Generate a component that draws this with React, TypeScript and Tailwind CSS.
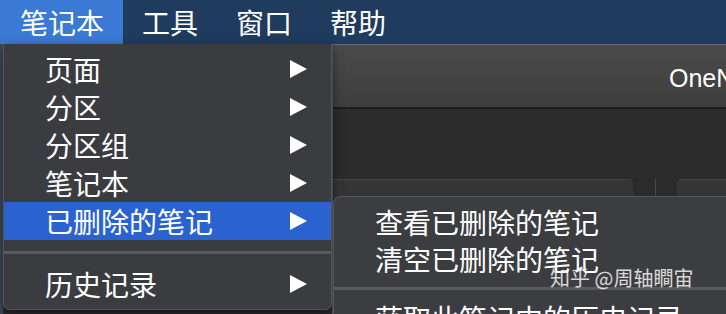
import React from 'react';

const cjk = { fontFamily: '"Noto Sans CJK SC", "Noto Sans", sans-serif' };

function Arrow() {
  return (
    <svg width="17" height="18" viewBox="0 0 17 18" className="shrink-0">
      <path d="M0 0 L17 9 L0 18 Z" fill="#ffffff" />
    </svg>
  );
}

const topMenus = ['笔记本', '工具', '窗口', '帮助'];
const mainItems = ['页面', '分区', '分区组', '笔记本'];

export default function App() {
  return (
    <div className="relative w-[726px] h-[314px] overflow-hidden bg-[#2b2b2b] text-white" style={cjk}>
      {/* menu bar */}
      <div className="flex h-[44px] bg-[#1f3c5e]">
        {topMenus.map((m, i) => (
          <div
            key={m}
            className={`flex items-center px-[19px] text-[28px] leading-none ${i === 0 ? 'bg-[#3a7ad4] pl-[20px]' : ''}`}
          >
            {m}
          </div>
        ))}
      </div>

      {/* window behind */}
      <div className="flex h-[270px]">
        <div className="w-[3px] bg-[#3d4b5b]" />
        <div className="w-[329px]" />
        <div className="flex-1 min-w-0 flex flex-col border-l border-[#5a5a5a]">
          <div className="h-[65px] flex items-center pl-[336px] pt-[6px] overflow-hidden bg-gradient-to-b from-[#4a4a4a] to-[#3e3e3e] border-t border-[#6a6a6a] border-b-2 border-b-[#1c1c1c]">
            <span className="text-[25px] font-medium whitespace-nowrap" style={{ fontFamily: '"Liberation Sans", Arial, sans-serif' }}>
              OneNote
            </span>
          </div>
          <div className="h-[70px] bg-[#2c2c2c]" />
          <div className="flex h-[20px]">
            <div className="w-[300px] rounded-tr-[5px] bg-[#353535] border-t border-[#444]" />
            <div className="w-[22px]" />
            <div className="w-[1px] bg-[#4a4a4a]" />
            <div className="w-[21px]" />
            <div className="flex-1 rounded-tl-[5px] bg-[#353535] border-t border-[#444]" />
          </div>
          <div className="flex-1 bg-[#2c2c2c]" />
        </div>
      </div>

      {/* main dropdown */}
      <div className="absolute left-[3px] top-[44px] w-[329px] h-[266px] rounded-b-[7px] bg-[#3b3c3f] border border-t-0 border-[#55565a] pt-[6px] shadow-[0_4px_12px_rgba(0,0,0,0.5)]">
        {mainItems.map((t) => (
          <div key={t} className="flex items-center justify-between h-[38px] pl-[41px] pr-[24px] text-[28px] leading-none">
            <span>{t}</span>
            <Arrow />
          </div>
        ))}
        <div className="flex items-center justify-between h-[38px] pl-[41px] pr-[24px] text-[28px] leading-none bg-[#2a62d0]">
          <span>已删除的笔记</span>
          <Arrow />
        </div>
        <div className="h-[25px] flex items-center">
          <div className="w-full h-[3px] bg-[#5a5b5e]" />
        </div>
        <div className="flex items-center justify-between h-[38px] pl-[41px] pr-[24px] text-[28px] leading-none">
          <span>历史记录</span>
          <Arrow />
        </div>
      </div>

      {/* sub menu */}
      <div className="absolute left-[333px] top-[196px] w-[420px] h-[140px] rounded-tl-[8px] bg-[#3c3d40] border-l border-t border-[#55565a] pt-[6px]">
        <div className="flex items-center h-[38px] pl-[41px] text-[28px] leading-none">查看已删除的笔记</div>
        <div className="flex items-center h-[36px] pl-[41px] text-[28px] leading-none">清空已删除的笔记</div>
        <div className="h-[22px] flex items-center">
          <div className="w-full h-[3px] bg-[#5a5b5e]" />
        </div>
        <div className="flex items-center h-[38px] pl-[41px] text-[28px] leading-none">获取此笔记中的历史记录</div>
      </div>

      {/* watermark */}
      <div className="absolute left-[550px] top-[268px] text-[20px] leading-none text-white/80">知乎 @周轴瞷宙</div>
    </div>
  );
}
